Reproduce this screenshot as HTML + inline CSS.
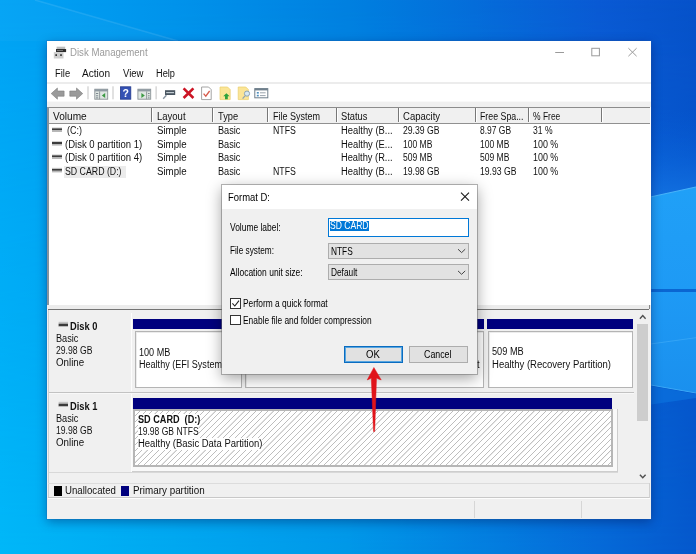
<!DOCTYPE html>
<html lang="en">
<head>
<meta charset="utf-8">
<title>Disk Management</title>
<style>
html,body{margin:0;padding:0;}
body{width:696px;height:554px;overflow:hidden;position:relative;background:#0a78d8;font-family:"Liberation Sans",sans-serif;}
.a{position:absolute;}
.t{position:absolute;white-space:nowrap;line-height:12px;display:inline-block;transform-origin:0 50%;}
#bg{position:absolute;left:0;top:0;}
#win{left:47px;top:41px;width:604px;height:478px;background:#fff;box-shadow:0 0 0 1px rgba(30,90,170,.25),0 3px 10px rgba(0,10,70,.38);}
.hl{position:absolute;height:1px;}
.vl{position:absolute;width:1px;}
</style>
</head>
<body>
<!-- desktop wallpaper -->
<svg id="bg" width="696" height="554" viewBox="0 0 696 554">
  <defs>
    <linearGradient id="gt" x1="0" y1="0" x2="1" y2="0">
      <stop offset="0" stop-color="#00a3f5"/>
      <stop offset="0.25" stop-color="#0093eb"/>
      <stop offset="0.5" stop-color="#0080e0"/>
      <stop offset="0.86" stop-color="#0a5ad4"/>
      <stop offset="1" stop-color="#0652ca"/>
    </linearGradient>
    <linearGradient id="gb" x1="0" y1="0" x2="1" y2="0">
      <stop offset="0" stop-color="#00b7f8"/>
      <stop offset="0.25" stop-color="#00a8f0"/>
      <stop offset="0.5" stop-color="#0098e8"/>
      <stop offset="0.86" stop-color="#056ad8"/>
      <stop offset="1" stop-color="#0558cc"/>
    </linearGradient>
    <linearGradient id="gm" x1="0" y1="0" x2="0" y2="1">
      <stop offset="0" stop-color="#fff" stop-opacity="0"/>
      <stop offset="1" stop-color="#fff" stop-opacity="1"/>
    </linearGradient>
    <mask id="mk"><rect width="696" height="554" fill="url(#gm)"/></mask>
    <linearGradient id="gp" x1="0" y1="0" x2="0" y2="1">
      <stop offset="0" stop-color="#20a0f7"/>
      <stop offset="0.5" stop-color="#1e9af5"/>
      <stop offset="1" stop-color="#1a90ee"/>
    </linearGradient>
    <linearGradient id="gu" x1="0" y1="0" x2="0" y2="1">
      <stop offset="0" stop-color="#0560dc" stop-opacity="0"/>
      <stop offset="1" stop-color="#1a80ea" stop-opacity="0.75"/>
    </linearGradient>
  </defs>
  <rect width="696" height="554" fill="url(#gt)"/>
  <rect width="696" height="554" fill="url(#gb)" mask="url(#mk)"/>
  <path d="M35 0 L178 41" stroke="#fff" stroke-opacity="0.10" stroke-width="1.6" fill="none"/>
  <polygon points="0,0 35,0 178,41 0,41" fill="#fff" opacity="0.025"/>
  <!-- light window panes on the right -->
  <polygon points="600,110 696,110 696,187 600,208" fill="url(#gu)"/>
  <polygon points="600,208 696,187 696,393 600,376" fill="url(#gp)"/>
  <path d="M600 208 L696 187" stroke="#48b4fa" stroke-width="1.2" fill="none"/>
  <rect x="600" y="289" width="96" height="3" fill="#0a66d2"/>
  <path d="M600 351 L696 337.7" stroke="#3aa8f6" stroke-width="1" fill="none" opacity="0.8"/>
  <path d="M600 376 L696 393" stroke="#3aa8f6" stroke-width="1.2" fill="none"/>
  <polygon points="600,377 696,394 696,398 600,412" fill="#0c72de" opacity="0.7"/>
</svg>

<div id="root" style="position:absolute;left:0;top:0;width:696px;height:554px;will-change:transform;">
<!-- main window -->
<div id="win" class="a"></div>

<!-- title bar icon + caption buttons -->
<svg class="a" style="left:47px;top:41px" width="604" height="66" viewBox="47 41 604 66">
  <!-- disk management icon -->
  <rect x="56.6" y="46.7" width="8.6" height="2.4" fill="#bdbdbd"/>
  <rect x="56" y="49" width="10.1" height="3.1" fill="#2e2e2e"/>
  <rect x="57" y="50" width="6" height="1" fill="#777"/>
  <rect x="53.8" y="52.1" width="9.7" height="6.4" fill="#cfcfcf"/>
  <rect x="55.4" y="54.2" width="1.6" height="1.8" fill="#333"/>
  <rect x="60.2" y="54.2" width="1.6" height="1.8" fill="#333"/>
  <!-- min / max / close (inactive) -->
  <g stroke="#9a9a9a" stroke-width="1" fill="none">
    <line x1="555.2" y1="52.5" x2="564" y2="52.5"/>
    <rect x="591.8" y="48.3" width="7.6" height="7.5"/>
    <path d="M628.4 48.2 L636.6 56.2 M636.6 48.2 L628.4 56.2"/>
  </g>
  <!-- menu / toolbar divider -->
  <rect x="47" y="82.5" width="604" height="1" fill="#d9d9d9"/>
  <!-- toolbar: back / forward -->
  <path d="M51.2 93.6 L57.4 88 L57.4 91 L64.1 91 L64.1 96.2 L57.4 96.2 L57.4 99.2 Z" fill="#9a9a9a" stroke="#7d7d7d" stroke-width="0.6"/>
  <path d="M82.7 93.6 L76.5 88 L76.5 91 L69.8 91 L69.8 96.2 L76.5 96.2 L76.5 99.2 Z" fill="#9a9a9a" stroke="#7d7d7d" stroke-width="0.6"/>
  <rect x="87.5" y="86.3" width="1" height="13" fill="#c4c4c4"/>
  <!-- show/hide console tree -->
  <rect x="94.8" y="89.2" width="12.9" height="10" fill="#dfe6e2" stroke="#8a9296" stroke-width="0.9"/>
  <rect x="94.8" y="89.2" width="12.9" height="2.2" fill="#8f9aa2"/>
  <rect x="99.2" y="91.4" width="0.9" height="7.8" fill="#8a9296"/>
  <path d="M105.2 93 L105.2 98 L101.8 95.5 Z" fill="#3c9a44"/>
  <rect x="96" y="93" width="2.2" height="1" fill="#7d8790"/><rect x="96" y="95.3" width="2.2" height="1" fill="#7d8790"/><rect x="96" y="97.4" width="2.2" height="1" fill="#7d8790"/>
  <rect x="112.5" y="86.3" width="1" height="13" fill="#c4c4c4"/>
  <!-- help -->
  <rect x="120.5" y="86.8" width="10.3" height="12.4" fill="#3552b4" stroke="#22398c" stroke-width="0.8"/>
  <text x="125.7" y="97" font-family="Liberation Sans, sans-serif" font-size="10.5" font-weight="700" fill="#fff" text-anchor="middle">?</text>
  <!-- action pane -->
  <rect x="137.9" y="89.2" width="12.8" height="10" fill="#dfe6e2" stroke="#8a9296" stroke-width="0.9"/>
  <rect x="137.9" y="89.2" width="12.8" height="2.2" fill="#8f9aa2"/>
  <rect x="146.2" y="91.4" width="0.9" height="7.8" fill="#8a9296"/>
  <path d="M141.4 93 L141.4 98 L144.8 95.5 Z" fill="#3c9a44"/>
  <rect x="148" y="93" width="1.6" height="1" fill="#7d8790"/><rect x="148" y="95.3" width="1.6" height="1" fill="#7d8790"/><rect x="148" y="97.4" width="1.6" height="1" fill="#7d8790"/>
  <rect x="155.6" y="86.3" width="1" height="13" fill="#c4c4c4"/>
  <!-- connect / rescan -->
  <path d="M165 90.2 L175.2 90.2 L175.2 95 L165 95 Z" fill="#4a5661"/>
  <rect x="166.2" y="92" width="7.8" height="1.2" fill="#c2ccd3"/>
  <path d="M163.2 98.8 L166.4 95.2" stroke="#8793a0" stroke-width="1.4" fill="none"/>
  <!-- delete -->
  <path d="M183.6 88.4 L193.4 98 M193.4 88.4 L183.6 98" stroke="#cc1424" stroke-width="2.6" fill="none"/>
  <!-- properties check -->
  <path d="M201.6 87 L208.6 87 L211.2 89.6 L211.2 99.6 L201.6 99.6 Z" fill="#fff" stroke="#9a9a9a" stroke-width="0.9"/>
  <path d="M203.6 93.6 L205.8 96.2 L209.6 91" stroke="#d65a4a" stroke-width="1.3" fill="none"/>
  <!-- folder up -->
  <path d="M220 87 L227.6 87 L230.2 89.6 L230.2 99.6 L220 99.6 Z" fill="#fbe596" stroke="#e9cf6e" stroke-width="0.7"/>
  <path d="M226.4 93.2 L229.6 96.2 L227.8 96.2 L227.8 99.2 L225 99.2 L225 96.2 L223.2 96.2 Z" fill="#2fa23c"/>
  <!-- folder search -->
  <path d="M238.2 87 L245.8 87 L248.4 89.6 L248.4 99.6 L238.2 99.6 Z" fill="#fbe596" stroke="#e9cf6e" stroke-width="0.7"/>
  <circle cx="247" cy="93.6" r="2.6" fill="#d6e8f2" stroke="#8fa4b2" stroke-width="1"/>
  <path d="M245 95.8 L242.6 98.6" stroke="#8fa4b2" stroke-width="1.3"/>
  <!-- view settings -->
  <rect x="254.8" y="88.6" width="13" height="9.2" fill="#fff" stroke="#6f7f8c" stroke-width="1"/>
  <rect x="254.8" y="88.6" width="13" height="1.8" fill="#6f7f8c"/>
  <rect x="256.8" y="92" width="2" height="1.6" fill="#4f8fbf"/><rect x="260" y="92.3" width="5.6" height="1" fill="#9aa4ad"/>
  <rect x="256.8" y="94.8" width="2" height="1.6" fill="#4f8fbf"/><rect x="260" y="95.1" width="5.6" height="1" fill="#9aa4ad"/>
  <!-- strip under toolbar -->
  <rect x="47" y="101.6" width="604" height="5.6" fill="#f0f0f0"/>
</svg>

<!-- volume list -->
<div class="a" style="left:48px;top:107px;width:602px;height:16.6px;background:#f0f0f0;border-top:1px solid #8c8c8c;border-bottom:1px solid #909090;box-sizing:border-box;"></div>
<div class="vl" style="left:151px;top:108px;height:14px;background:#777"></div><div class="vl" style="left:152px;top:108px;height:14px;background:#fff"></div>
<div class="vl" style="left:212px;top:108px;height:14px;background:#777"></div><div class="vl" style="left:213px;top:108px;height:14px;background:#fff"></div>
<div class="vl" style="left:267px;top:108px;height:14px;background:#777"></div><div class="vl" style="left:268px;top:108px;height:14px;background:#fff"></div>
<div class="vl" style="left:336px;top:108px;height:14px;background:#777"></div><div class="vl" style="left:337px;top:108px;height:14px;background:#fff"></div>
<div class="vl" style="left:398px;top:108px;height:14px;background:#777"></div><div class="vl" style="left:399px;top:108px;height:14px;background:#fff"></div>
<div class="vl" style="left:475px;top:108px;height:14px;background:#777"></div><div class="vl" style="left:476px;top:108px;height:14px;background:#fff"></div>
<div class="vl" style="left:528px;top:108px;height:14px;background:#777"></div><div class="vl" style="left:529px;top:108px;height:14px;background:#fff"></div>
<div class="vl" style="left:601px;top:108px;height:14px;background:#777"></div><div class="vl" style="left:602px;top:108px;height:14px;background:#fff"></div>
<div class="vl" style="left:47.2px;top:107px;height:202px;width:1.6px;background:#87939c"></div>
<!-- selected row (inactive) -->
<div class="a" style="left:63.6px;top:166px;width:62px;height:11.8px;background:#ebebeb"></div>
<!-- drive glyphs -->
<svg class="a" style="left:50px;top:124px" width="16" height="56" viewBox="50 124 16 56">
  <g id="drv">
    <rect x="52" y="128.2" width="10" height="2.2" fill="#3c3c3c"/>
    <rect x="52" y="130.4" width="10" height="1.6" fill="#b8b8b8"/>
    <rect x="52" y="127.4" width="10" height="0.8" fill="#d0d0d0"/>
  </g>
  <use href="#drv" y="13.6"/><use href="#drv" y="27"/><use href="#drv" y="40.4"/>
</svg>

<!-- splitter + graphical view -->
<div class="a" style="left:47px;top:305px;width:604px;height:214px;background:#f0f0f0"></div>
<div class="a" style="left:47px;top:305px;width:604px;height:4px;background:#ececec"></div>
<div class="hl" style="left:48px;top:308.7px;width:601.4px;background:#747474"></div>
<div class="vl" style="left:648.6px;top:305.4px;height:4px;background:#8a8a8a"></div>

<!-- Disk 0 -->
<div class="vl" style="left:130.5px;top:313px;height:78px;background:#fdfdfd;width:1.5px"></div>
<div class="a" style="left:133.3px;top:318.6px;width:109.4px;height:10.6px;background:#00007e"></div>
<div class="a" style="left:245.2px;top:318.6px;width:239px;height:10.6px;background:#00007e"></div>
<div class="a" style="left:486.9px;top:318.6px;width:146.1px;height:10.6px;background:#00007e"></div>
<div class="a" style="left:134.5px;top:330.6px;width:107.6px;height:57.4px;background:#fff;border:1px solid #b4b4b4;box-sizing:border-box;box-shadow:inset 1px 1px 0 #ececec"></div>
<div class="a" style="left:245px;top:330.6px;width:239.4px;height:57.4px;background:#fff;border:1px solid #b4b4b4;box-sizing:border-box;box-shadow:inset 1px 1px 0 #ececec"></div>
<div class="a" style="left:487.6px;top:330.6px;width:145.6px;height:57.4px;background:#fff;border:1px solid #b4b4b4;box-sizing:border-box;box-shadow:inset 1px 1px 0 #ececec"></div>
<div class="hl" style="left:49px;top:391.8px;width:585px;background:#c2c2c2;height:1.1px"></div>
<div class="hl" style="left:49px;top:392.9px;width:585px;background:#f8f8f8;height:1px"></div>
<div class="vl" style="left:48.4px;top:310px;height:188px;background:#d0d0d0"></div>

<!-- Disk 1 -->
<div class="vl" style="left:130.5px;top:394px;height:78px;background:#fdfdfd;width:1.5px"></div>
<div class="a" style="left:133.3px;top:398.2px;width:479.2px;height:10.8px;background:#00007e"></div>
<div class="a" style="left:132.2px;top:409px;width:485.8px;height:62.6px;background:#f9f9f9;border-right:1.3px solid #cdcdcd;border-bottom:1.3px solid #cdcdcd;box-sizing:border-box"></div>
<div class="a" id="hatch" style="left:132.6px;top:409.2px;width:480px;height:58px;box-sizing:border-box;border:2.2px solid #b6b6b6;background-color:#fff;background-image:repeating-linear-gradient(135deg,rgba(190,190,190,0) 0,rgba(190,190,190,0) 3.2px,#bdbdbd 3.35px,#bdbdbd 3.95px,rgba(190,190,190,0) 4.1px);"></div>
<div class="hl" style="left:49px;top:472px;width:569px;background:#d8d8d8"></div>

<!-- drive glyphs in graphical view -->
<svg class="a" style="left:56px;top:320px" width="16" height="92" viewBox="56 320 16 92">
  <g id="drv2">
    <rect x="58.6" y="321.8" width="9.4" height="1.9" fill="#c6c6c6"/>
    <rect x="58.6" y="323.7" width="9.4" height="2.6" fill="#3c3c3c"/>
    <rect x="58.6" y="326.3" width="9.4" height="0.7" fill="#bdbdbd"/>
  </g>
  <use href="#drv2" y="80"/>
</svg>

<!-- vertical scrollbar -->
<div class="a" style="left:635.2px;top:310px;width:14px;height:173px;background:#f0f0f0"></div>
<div class="a" style="left:637.2px;top:323.5px;width:11px;height:97px;background:#cdcdcd"></div>
<svg class="a" style="left:635px;top:310px" width="15" height="173" viewBox="635 310 15 173">
  <path d="M639.9 318.7 L642.75 315.6 L645.6 318.7" stroke="#505050" stroke-width="1.4" fill="none"/>
  <path d="M639.9 474.7 L642.75 477.8 L645.6 474.7" stroke="#505050" stroke-width="1.4" fill="none"/>
</svg>

<!-- legend -->
<div class="hl" style="left:48px;top:483px;width:602px;background:#dcdcdc"></div>
<div class="a" style="left:53.6px;top:485.6px;width:8.2px;height:10px;background:#000"></div>
<div class="a" style="left:121.3px;top:485.6px;width:8.2px;height:10px;background:#00007e"></div>
<div class="hl" style="left:48px;top:497.4px;width:602px;background:#c8c8c8"></div>
<div class="hl" style="left:48px;top:498.4px;width:602px;background:#fdfdfd"></div>
<div class="vl" style="left:648.8px;top:483px;height:15px;background:#d0d0d0"></div>
<!-- status bar -->
<div class="vl" style="left:473.5px;top:501px;height:17px;background:#d6d6d6"></div>
<div class="vl" style="left:580.6px;top:501px;height:17px;background:#d6d6d6"></div>


<span class="t" style="left:69.8px;top:47.34px;font-size:10.0px;color:#9b9b9b;transform:scaleX(0.963);">Disk Management</span>
<span class="t" style="left:54.8px;top:67.53px;font-size:10.0px;color:#111;transform:scaleX(0.936);">File</span>
<span class="t" style="left:82.4px;top:67.53px;font-size:10.0px;color:#111;transform:scaleX(1.007);">Action</span>
<span class="t" style="left:123.3px;top:67.53px;font-size:10.0px;color:#111;transform:scaleX(0.949);">View</span>
<span class="t" style="left:156.1px;top:67.53px;font-size:10.0px;color:#111;transform:scaleX(0.920);">Help</span>
<span class="t" style="left:52.8px;top:110.94px;font-size:10.0px;color:#111;transform:scaleX(1.010);">Volume</span>
<span class="t" style="left:156.9px;top:110.94px;font-size:10.0px;color:#111;transform:scaleX(0.950);">Layout</span>
<span class="t" style="left:217.9px;top:110.94px;font-size:10.0px;color:#111;transform:scaleX(0.930);">Type</span>
<span class="t" style="left:272.5px;top:110.94px;font-size:10.0px;color:#111;transform:scaleX(0.902);">File System</span>
<span class="t" style="left:341.1px;top:110.94px;font-size:10.0px;color:#111;transform:scaleX(0.931);">Status</span>
<span class="t" style="left:403.1px;top:110.94px;font-size:10.0px;color:#111;transform:scaleX(0.954);">Capacity</span>
<span class="t" style="left:480.3px;top:110.94px;font-size:10.0px;color:#111;transform:scaleX(0.879);">Free Spa...</span>
<span class="t" style="left:533.4px;top:110.94px;font-size:10.0px;color:#111;transform:scaleX(0.847);">% Free</span>
<span class="t" style="left:67.2px;top:125.23px;font-size:10.0px;color:#111;transform:scaleX(0.894);">(C:)</span>
<span class="t" style="left:156.9px;top:125.23px;font-size:10.0px;color:#111;transform:scaleX(0.968);">Simple</span>
<span class="t" style="left:217.9px;top:125.23px;font-size:10.0px;color:#111;transform:scaleX(0.916);">Basic</span>
<span class="t" style="left:272.5px;top:125.23px;font-size:10.0px;color:#111;transform:scaleX(0.877);">NTFS</span>
<span class="t" style="left:341.1px;top:125.23px;font-size:10.0px;color:#111;transform:scaleX(0.938);">Healthy (B...</span>
<span class="t" style="left:403.1px;top:125.23px;font-size:10.0px;color:#111;transform:scaleX(0.864);">29.39 GB</span>
<span class="t" style="left:480.3px;top:125.23px;font-size:10.0px;color:#111;transform:scaleX(0.847);">8.97 GB</span>
<span class="t" style="left:533.4px;top:125.23px;font-size:10.0px;color:#111;transform:scaleX(0.855);">31 %</span>
<span class="t" style="left:64.5px;top:138.83px;font-size:10.0px;color:#111;transform:scaleX(0.951);">(Disk 0 partition 1)</span>
<span class="t" style="left:156.9px;top:138.83px;font-size:10.0px;color:#111;transform:scaleX(0.968);">Simple</span>
<span class="t" style="left:217.9px;top:138.83px;font-size:10.0px;color:#111;transform:scaleX(0.916);">Basic</span>
<span class="t" style="left:341.1px;top:138.83px;font-size:10.0px;color:#111;transform:scaleX(0.938);">Healthy (E...</span>
<span class="t" style="left:403.1px;top:138.83px;font-size:10.0px;color:#111;transform:scaleX(0.853);">100 MB</span>
<span class="t" style="left:480.3px;top:138.83px;font-size:10.0px;color:#111;transform:scaleX(0.853);">100 MB</span>
<span class="t" style="left:533.4px;top:138.83px;font-size:10.0px;color:#111;transform:scaleX(0.892);">100 %</span>
<span class="t" style="left:64.5px;top:152.23px;font-size:10.0px;color:#111;transform:scaleX(0.951);">(Disk 0 partition 4)</span>
<span class="t" style="left:156.9px;top:152.23px;font-size:10.0px;color:#111;transform:scaleX(0.968);">Simple</span>
<span class="t" style="left:217.9px;top:152.23px;font-size:10.0px;color:#111;transform:scaleX(0.916);">Basic</span>
<span class="t" style="left:341.1px;top:152.23px;font-size:10.0px;color:#111;transform:scaleX(0.928);">Healthy (R...</span>
<span class="t" style="left:403.1px;top:152.23px;font-size:10.0px;color:#111;transform:scaleX(0.853);">509 MB</span>
<span class="t" style="left:480.3px;top:152.23px;font-size:10.0px;color:#111;transform:scaleX(0.853);">509 MB</span>
<span class="t" style="left:533.4px;top:152.23px;font-size:10.0px;color:#111;transform:scaleX(0.892);">100 %</span>
<span class="t" style="left:64.5px;top:165.53px;font-size:10.0px;color:#111;transform:scaleX(0.877);">SD CARD (D:)</span>
<span class="t" style="left:156.9px;top:165.53px;font-size:10.0px;color:#111;transform:scaleX(0.968);">Simple</span>
<span class="t" style="left:217.9px;top:165.53px;font-size:10.0px;color:#111;transform:scaleX(0.916);">Basic</span>
<span class="t" style="left:272.5px;top:165.53px;font-size:10.0px;color:#111;transform:scaleX(0.877);">NTFS</span>
<span class="t" style="left:341.1px;top:165.53px;font-size:10.0px;color:#111;transform:scaleX(0.938);">Healthy (B...</span>
<span class="t" style="left:403.1px;top:165.53px;font-size:10.0px;color:#111;transform:scaleX(0.864);">19.98 GB</span>
<span class="t" style="left:480.3px;top:165.53px;font-size:10.0px;color:#111;transform:scaleX(0.864);">19.93 GB</span>
<span class="t" style="left:533.4px;top:165.53px;font-size:10.0px;color:#111;transform:scaleX(0.892);">100 %</span>
<span class="t" style="left:70.4px;top:320.74px;font-size:10.0px;color:#111;transform:scaleX(0.930);font-weight:700;">Disk 0</span>
<span class="t" style="left:55.9px;top:332.74px;font-size:10.0px;color:#111;transform:scaleX(0.916);">Basic</span>
<span class="t" style="left:55.9px;top:345.04px;font-size:10.0px;color:#111;transform:scaleX(0.861);">29.98 GB</span>
<span class="t" style="left:55.9px;top:356.74px;font-size:10.0px;color:#111;transform:scaleX(0.976);">Online</span>
<span class="t" style="left:70.4px;top:400.84px;font-size:10.0px;color:#111;transform:scaleX(0.930);font-weight:700;">Disk 1</span>
<span class="t" style="left:55.9px;top:412.54px;font-size:10.0px;color:#111;transform:scaleX(0.916);">Basic</span>
<span class="t" style="left:55.9px;top:424.84px;font-size:10.0px;color:#111;transform:scaleX(0.861);">19.98 GB</span>
<span class="t" style="left:55.9px;top:436.84px;font-size:10.0px;color:#111;transform:scaleX(0.976);">Online</span>
<span class="t" style="left:138.6px;top:346.63px;font-size:10.0px;color:#111;transform:scaleX(0.908);">100 MB</span>
<span class="t" style="left:138.6px;top:358.63px;font-size:10.0px;color:#111;transform:scaleX(0.905);max-width:108px;overflow:hidden;">Healthy (EFI System Partition)</span>
<span class="t" style="left:491.5px;top:346.44px;font-size:10.0px;color:#111;transform:scaleX(0.920);">509 MB</span>
<span class="t" style="left:491.5px;top:358.74px;font-size:10.0px;color:#111;transform:scaleX(0.952);">Healthy (Recovery Partition)</span>
<span class="t" style="left:137.8px;top:413.94px;font-size:10.0px;color:#111;transform:scaleX(0.912);font-weight:700;white-space:pre;background:#fff;">SD CARD  (D:)</span>
<span class="t" style="left:137.8px;top:426.24px;font-size:10.0px;color:#111;transform:scaleX(0.853);background:#fff;">19.98 GB NTFS</span>
<span class="t" style="left:137.8px;top:438.24px;font-size:10.0px;color:#111;transform:scaleX(0.948);background:#fff;">Healthy (Basic Data Partition)</span>
<span class="t" style="left:64.9px;top:484.94px;font-size:10.0px;color:#111;transform:scaleX(0.964);">Unallocated</span>
<span class="t" style="left:132.6px;top:484.94px;font-size:10.0px;color:#111;transform:scaleX(0.985);">Primary partition</span>
<span class="t" style="left:476.6px;top:358.63px;font-size:10.0px;color:#111;transform:scaleX(0.930);">t</span>

<!-- Format dialog -->
<div class="a" id="dlg" style="left:221.5px;top:185px;width:255.2px;height:188.6px;background:#f0f0f0;box-shadow:0 0 0 1px rgba(110,110,110,.5),0 4px 14px rgba(0,0,0,.38);"></div>
<div class="a" style="left:221.5px;top:185px;width:255.2px;height:24.4px;background:#fff"></div>
<svg class="a" style="left:455px;top:188px" width="20" height="18" viewBox="455 188 20 18">
  <path d="M461 192.7 L469 200.7 M469 192.7 L461 200.7" stroke="#1a1a1a" stroke-width="1.1" fill="none"/>
</svg>
<!-- volume label input -->
<div class="a" style="left:327.8px;top:218.4px;width:141.2px;height:18.2px;background:#fff;border:1px solid #0078d7;box-sizing:border-box"></div>
<div class="a" style="left:329.8px;top:220.7px;width:39.2px;height:10.6px;background:#0078d7"></div>
<!-- combos -->
<div class="a" style="left:327.8px;top:242.6px;width:141.2px;height:16.2px;background:#e2e2e2;border:1px solid #adadad;box-sizing:border-box"></div>
<div class="a" style="left:327.8px;top:264.3px;width:141.2px;height:16.2px;background:#e2e2e2;border:1px solid #adadad;box-sizing:border-box"></div>
<svg class="a" style="left:455px;top:244px" width="14" height="36" viewBox="455 244 14 36">
  <path d="M458 249.2 L461.6 252.6 L465.2 249.2" stroke="#444" stroke-width="1" fill="none"/>
  <path d="M458 270.9 L461.6 274.3 L465.2 270.9" stroke="#444" stroke-width="1" fill="none"/>
</svg>
<!-- checkboxes -->
<div class="a" style="left:230.4px;top:298.4px;width:10.4px;height:10.4px;background:#fff;border:1px solid #333;box-sizing:border-box"></div>
<div class="a" style="left:230.4px;top:314.8px;width:10.4px;height:10.4px;background:#fff;border:1px solid #333;box-sizing:border-box"></div>
<svg class="a" style="left:230px;top:298px" width="12" height="12" viewBox="230 298 12 12">
  <path d="M232.4 303.4 L234.8 306 L239 300.6" stroke="#222" stroke-width="1.1" fill="none"/>
</svg>
<!-- buttons -->
<div class="a" style="left:344.2px;top:346px;width:58.6px;height:16.6px;background:#e1e1e1;border:1.2px solid #0b6cc0;box-shadow:inset 0 0 0 1px #58a6e0;box-sizing:border-box"></div>
<div class="a" style="left:409.4px;top:346.4px;width:58.6px;height:16.2px;background:#e1e1e1;border:1px solid #adadad;box-sizing:border-box"></div>


<span class="t" style="left:227.9px;top:192.34px;font-size:10.0px;color:#000;transform:scaleX(0.943);">Format D:</span>
<span class="t" style="left:229.7px;top:222.34px;font-size:10.0px;color:#000;transform:scaleX(0.844);">Volume label:</span>
<span class="t" style="left:229.7px;top:245.24px;font-size:10.0px;color:#000;transform:scaleX(0.825);">File system:</span>
<span class="t" style="left:229.7px;top:267.04px;font-size:10.0px;color:#000;transform:scaleX(0.849);">Allocation unit size:</span>
<span class="t" style="left:330.3px;top:220.27px;font-size:10.2px;color:#fff;transform:scaleX(0.840);">SD CARD</span>
<span class="t" style="left:331.1px;top:245.87px;font-size:10.2px;color:#000;transform:scaleX(0.816);">NTFS</span>
<span class="t" style="left:331.1px;top:267.27px;font-size:10.2px;color:#000;transform:scaleX(0.815);">Default</span>
<span class="t" style="left:242.9px;top:297.84px;font-size:10.0px;color:#000;transform:scaleX(0.837);">Perform a quick format</span>
<span class="t" style="left:242.9px;top:314.94px;font-size:10.0px;color:#000;transform:scaleX(0.838);">Enable file and folder compression</span>
<span class="t" style="left:366.2px;top:348.74px;font-size:10.0px;color:#000;transform:scaleX(0.955);">OK</span>
<span class="t" style="left:423.9px;top:348.74px;font-size:10.0px;color:#000;transform:scaleX(0.883);">Cancel</span>

<!-- red pointer arrow -->
<svg class="a" style="left:360px;top:364px" width="28" height="72" viewBox="360 364 28 72">
  <path d="M373.9 367.5 L381.2 379.9 Q379 379.3 376.5 377.9 L374.7 431.6 L373.5 431.6 L371.3 377.9 Q369 379.3 367.2 379.9 Z" fill="#e0141a" stroke="#e0141a" stroke-width="0.5" stroke-linejoin="round"/>
</svg>

</div>
</body>
</html>
